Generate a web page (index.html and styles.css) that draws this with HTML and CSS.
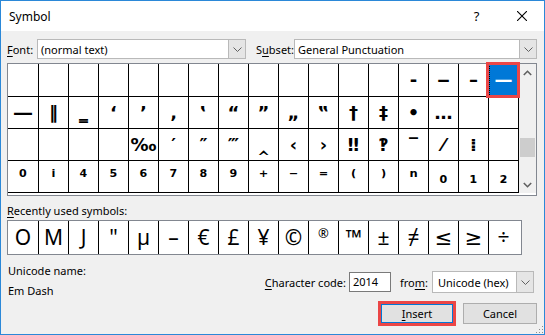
FILE: index.html
```html
<!DOCTYPE html>
<html lang="en">
  <head>
    <meta charset="UTF-8" />
    <title>Symbol</title>
    <link rel="stylesheet" href="styles.css">
  </head>
  <body>
    <div class="dialog">
      <header class="titlebar">
        <span class="title">Symbol</span>
        <span class="tb-btn help">?</span>
        <span class="tb-btn">
          <svg width="10" height="10" viewBox="0 0 10 10"><path d="M0 0L10 10M10 0L0 10" stroke="#000" stroke-width="1.1" /></svg>
        </span>
      </header>

      <div class="content">
        <div class="font-row">
          <label class="lbl-font"><u>F</u>ont:</label>
          <div class="select select-font">
            <span class="value">(normal text)</span>
            <span class="drop"><svg width="9" height="5" viewBox="0 0 9 5"><polyline points="0.5,0.5 4.5,4.5 8.5,0.5" fill="none" stroke="#606060" /></svg></span>
          </div>
          <label class="lbl-subset">S<u>u</u>bset:</label>
          <div class="select select-subset">
            <span class="value">General Punctuation</span>
            <span class="drop"><svg width="9" height="5" viewBox="0 0 9 5"><polyline points="0.5,0.5 4.5,4.5 8.5,0.5" fill="none" stroke="#606060" /></svg></span>
          </div>
        </div>

        <div class="charmap">
          <div class="grid" id="grid"></div>
          <div class="scrollbar">
            <span class="sb-arrow"><svg width="9" height="6" viewBox="0 0 9 6"><polyline points="0.8,5 4.5,1.3 8.2,5" fill="none" stroke="#606060" stroke-width="1.6" /></svg></span>
            <span class="sb-thumb"></span>
            <span class="sb-arrow sb-down"><svg width="9" height="6" viewBox="0 0 9 6"><polyline points="0.8,1 4.5,4.7 8.2,1" fill="none" stroke="#606060" stroke-width="1.6" /></svg></span>
          </div>
        </div>

        <div class="recent-label"><u>R</u>ecently used symbols:</div>
        <div class="recent" id="recent"></div>

        <div class="bottom">
          <div class="info">
            <div>Unicode name:</div>
            <div class="uname">Em Dash</div>
          </div>
          <div class="actions">
            <div class="code-row">
              <label><u>C</u>haracter code:</label>
              <span class="code-input">2014</span>
              <label class="lbl-from">fro<u>m</u>:</label>
              <div class="select select-from">
                <span class="value">Unicode (hex)</span>
                <span class="drop"><svg width="9" height="5" viewBox="0 0 9 5"><polyline points="0.5,0.5 4.5,4.5 8.5,0.5" fill="none" stroke="#606060" /></svg></span>
              </div>
            </div>
            <div class="buttons">
              <button class="btn btn-insert"><u>I</u>nsert</button>
              <button class="btn">Cancel</button>
            </div>
          </div>
        </div>
      </div>

      <svg class="grip" width="9" height="9" viewBox="0 0 9 9">
        <rect x="7" y="1" width="1" height="1" fill="#8a8a8a" />
        <rect x="4" y="4" width="1" height="1" fill="#8a8a8a" />
        <rect x="7" y="4" width="1" height="1" fill="#8a8a8a" />
        <rect x="1" y="7" width="1" height="1" fill="#8a8a8a" />
        <rect x="4" y="7" width="1" height="1" fill="#8a8a8a" />
        <rect x="7" y="7" width="1" height="1" fill="#8a8a8a" />
      </svg>
    </div>

    <script>
      const rows = [
        ['', '', '', '', '', '', '', '', '', '', '', '', '', '‐', '‒', '–', '—'],
        ['―', '‖', '‗', '‘', '’', '‚', '‛', '“', '”', '„', '‟', '†', '‡', '•', '…', '', ''],
        ['', '', '', '', '‰', '′', '″', '‴', '‸', '‹', '›', '‼', '‽', '‾', '⁄', '⁞', ''],
        ['⁰', 'ⁱ', '⁴', '⁵', '⁶', '⁷', '⁸', '⁹', '⁺', '⁻', '⁼', '⁽', '⁾', 'ⁿ', '₀', '₁', '₂']
      ];
      const recent = ['O', 'M', 'J', '"', 'µ', '–', '€', '£', '¥', '©', '®', '™', '±', '≠', '≤', '≥', '÷'];

      const grid = document.querySelector('#grid');
      rows.forEach((row, r) => {
        row.forEach((ch, c) => {
          const cell = document.createElement('span');
          cell.className = 'cell';
          if (r === 0 && c === 16) cell.classList.add('sel');
          cell.textContent = ch;
          grid.append(cell);
        });
      });

      const box = document.querySelector('#recent');
      recent.forEach((ch) => {
        const cell = document.createElement('span');
        cell.className = 'rcell';
        if (ch === '®') cell.classList.add('small');
        cell.textContent = ch;
        box.append(cell);
      });
    </script>
  </body>
</html>
```

FILE: styles.css
```css
* {
  box-sizing: border-box;
}

body {
  margin: 0;
  font-family: "Noto Sans", "DejaVu Sans", sans-serif;
  font-size: 11px;
  color: #000;
}

u {
  text-decoration-thickness: 1px;
  text-underline-offset: 2px;
}

.dialog {
  position: relative;
  width: 545px;
  height: 335px;
  border: 1px solid #2b88d8;
  background: #f0f0f0;
  display: flex;
  flex-direction: column;
}

.titlebar {
  height: 30px;
  flex: none;
  background: #fff;
  display: flex;
  align-items: center;
}

.title {
  flex: 1;
  padding-left: 8px;
  font-size: 12px;
}

.tb-btn {
  width: 45px;
  height: 30px;
  display: flex;
  align-items: center;
  justify-content: center;
}

.help {
  font-size: 13px;
}

.content {
  padding: 8px 7px 0 6px;
}

.font-row {
  display: flex;
  align-items: center;
  height: 20px;
}

.lbl-font {
  width: 30px;
}

.lbl-subset {
  margin-left: 10px;
  width: 38px;
}

.select {
  height: 20px;
  background: #fff;
  border: 1px solid #b9b9b9;
  display: flex;
  align-items: center;
}

.select .value {
  flex: 1;
  padding-left: 3px;
  white-space: nowrap;
}

.select .drop {
  width: 17px;
  height: 18px;
  background: #e5e5e5;
  border-left: 1px solid #b9b9b9;
  display: flex;
  align-items: center;
  justify-content: center;
}

.select-font {
  width: 209px;
}

.select-subset {
  flex: 1;
}

.charmap {
  margin-top: 4px;
  border: 1px solid #828790;
  display: flex;
  padding-bottom: 2px;
  background: #fff;
}

.grid {
  display: grid;
  grid-template-columns: repeat(17, 30px);
  grid-auto-rows: 32px;
  border-right: 1px solid #000;
  border-bottom: 1px solid #000;
  font-family: "DejaVu Sans", sans-serif;
  font-size: 18px;
  font-weight: bold;
}

.cell {
  border-left: 1px solid #000;
  text-align: center;
  line-height: 30px;
  padding-top: 1px;
  overflow: hidden;
}

.cell:nth-child(17n+1) {
  border-left: 0;
}

.cell:nth-child(n+18) {
  border-top: 1px solid #000;
}

.cell.sel {
  color: #fff;
  background: repeating-linear-gradient(to bottom, #000 0 1px, transparent 1px 2px) left / 1px 100% no-repeat, #0078d7;
  outline: 3px solid #eb4646;
  outline-offset: -1px;
  position: relative;
}

.scrollbar {
  flex: 1;
  background: #f0f0f0;
  display: flex;
  flex-direction: column;
  align-items: center;
}

.sb-arrow {
  height: 17px;
  display: flex;
  align-items: center;
  justify-content: center;
}

.sb-thumb {
  margin-top: 57px;
  width: 15px;
  height: 19px;
  background: #cdcdcd;
}

.sb-down {
  margin-top: auto;
}

.recent-label {
  margin-top: 7px;
  line-height: 16px;
}

.recent {
  margin-top: 1px;
  width: 515px;
  height: 35px;
  border: 1px solid #828790;
  background: #fff;
  display: flex;
}

.rcell {
  width: 30px;
  border-left: 1px solid #000;
  text-align: center;
  font-size: 21px;
  line-height: 33px;
}

.rcell.small {
  font-size: 13px;
  line-height: 25px;
}

.rcell:first-child {
  border-left: 0;
}

.bottom {
  margin-top: 8px;
  display: flex;
}

.info {
  padding-left: 1px;
  line-height: 16px;
}

.uname {
  margin-top: 4px;
}

.actions {
  margin-left: auto;
  padding-top: 8px;
  display: flex;
  flex-direction: column;
  align-items: flex-end;
}

.code-row {
  display: flex;
  align-items: center;
  height: 22px;
  margin-right: 3px;
}

.code-input {
  margin-left: 3px;
  width: 42px;
  height: 20px;
  line-height: 18px;
  padding-left: 3px;
  background: #fff;
  border: 1px solid #7a7a7a;
}

.lbl-from {
  margin-left: 9px;
}

.select-from {
  margin-left: 4px;
  width: 102px;
  height: 22px;
}

.select-from .value {
  padding-left: 5px;
}

.select-from .drop {
  height: 20px;
}

.buttons {
  margin-top: 10px;
  display: flex;
  gap: 9px;
}

.btn {
  width: 74px;
  height: 21px;
  padding: 0;
  font: inherit;
  background: #e1e1e1;
  border: 1px solid #adadad;
}

.btn-insert {
  border: 2px solid #0078d7;
  outline: 3px solid #eb4646;
  outline-offset: -1px;
}

.grip {
  position: absolute;
  right: 0;
  bottom: 0;
}
```
